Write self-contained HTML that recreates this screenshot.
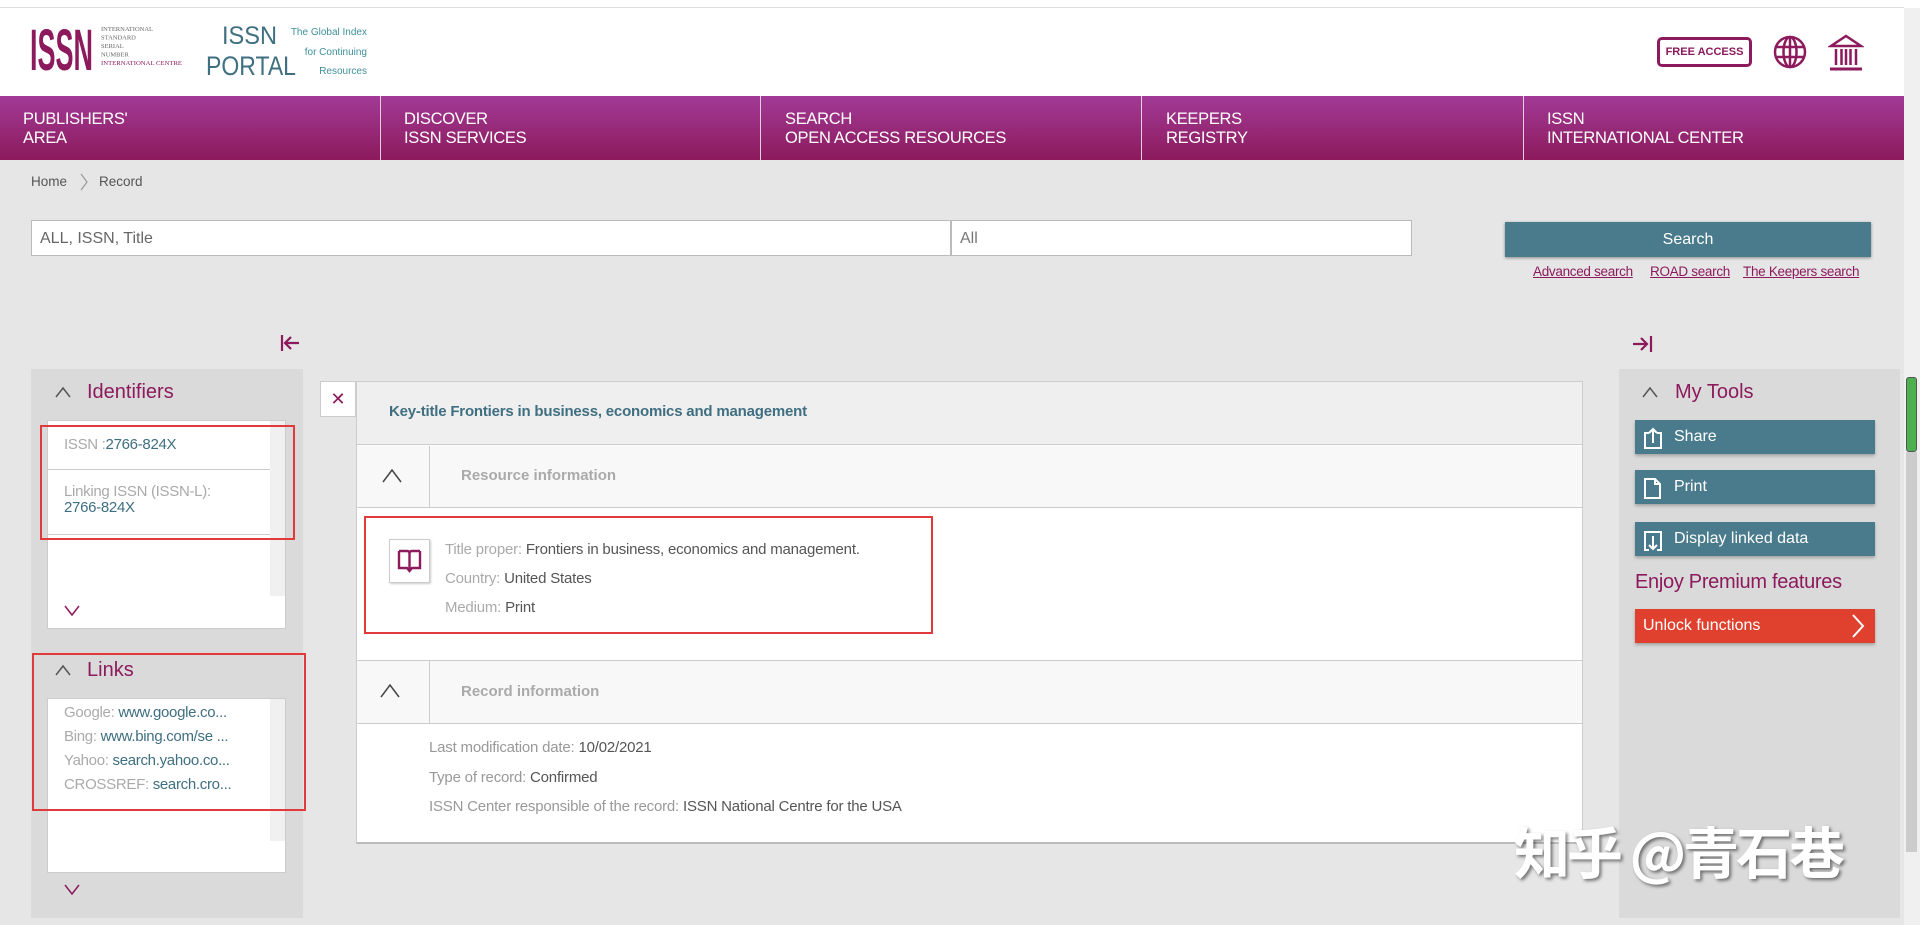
<!DOCTYPE html>
<html><head><meta charset="utf-8"><style>
*{margin:0;padding:0;box-sizing:border-box}
body{width:1920px;height:925px;overflow:hidden;background:#e6e6e6;font-family:"Liberation Sans",Arial,sans-serif;position:relative}
.a{position:absolute}
.nav{left:0;top:96px;width:1904px;height:64px;background:linear-gradient(#a23a96,#8c1a5c)}
.nav div{position:absolute;top:14px;color:#fff;font-size:16.5px;line-height:19px;letter-spacing:-.3px}
.sep{position:absolute;top:0;width:1px;height:64px;background:#e8d0e0}
.lbl{color:#aaa}
.val{color:#555}
.teal{color:#3f6f80}
.btn{position:absolute;left:1635px;width:240px;height:34px;background:#4a7b8c;color:#fff;font-size:16px;line-height:34px;padding-left:39px;box-shadow:0 2px 3px rgba(0,0,0,.25)}
.btn svg{position:absolute;left:8px;top:7px}
.chev{position:absolute}
</style></head><body>
<div class="a" style="left:0;top:0;width:1920px;height:96px;background:#fff"></div>
<div class="a" style="left:0;top:7px;width:1904px;height:1px;background:#ddd"></div>
<!-- logo -->
<svg class="a" style="left:0;top:0" width="380" height="96">
<text x="30" y="70" font-family="Liberation Sans" font-weight="bold" font-size="58" fill="#8c1a5c" textLength="63" lengthAdjust="spacingAndGlyphs">ISSN</text>
<g font-family="Liberation Serif" font-size="6.5" fill="#666">
<text x="101" y="31">INTERNATIONAL</text><text x="101" y="39.5">STANDARD</text><text x="101" y="48">SERIAL</text><text x="101" y="56.5">NUMBER</text><text x="101" y="65" fill="#8c1a5c" textLength="81" lengthAdjust="spacingAndGlyphs">INTERNATIONAL CENTRE</text></g>
<text x="222" y="44" font-family="Liberation Sans" font-size="25" fill="#3f6f80" textLength="55" lengthAdjust="spacingAndGlyphs">ISSN</text>
<text x="206" y="75" font-family="Liberation Sans" font-size="27" fill="#3f6f80" textLength="90" lengthAdjust="spacingAndGlyphs">PORTAL</text>
<g font-family="Liberation Sans" font-size="10" fill="#3f8f9a" text-anchor="end">
<text x="367" y="35">The Global Index</text><text x="367" y="55">for Continuing</text><text x="367" y="74">Resources</text></g>
</svg>
<!-- right icons -->
<div class="a" style="left:1657px;top:37px;width:95px;height:30px;border:3px solid #8c1a5c;border-radius:5px;color:#8c1a5c;font-size:11px;font-weight:bold;text-align:center;line-height:24px">FREE ACCESS</div>
<svg class="a" style="left:1773px;top:35px" width="34" height="34" viewBox="0 0 34 34" fill="none" stroke="#8c1a5c" stroke-width="2.5"><circle cx="17" cy="17" r="15"/><ellipse cx="17" cy="17" rx="6.5" ry="15"/><line x1="17" y1="2" x2="17" y2="32"/><line x1="2" y1="12" x2="32" y2="12"/><line x1="2" y1="22" x2="32" y2="22"/></svg>
<svg class="a" style="left:1828px;top:33px" width="36" height="38" viewBox="0 0 36 38" fill="none" stroke="#8c1a5c" stroke-width="2.5"><path d="M3 13 L18 3 L33 13 Z"/><path d="M8 16v16M13.5 16v16M18 16v16M22.5 16v16M28 16v16"/><line x1="2" y1="36" x2="34" y2="36" stroke-width="3"/></svg>
<!-- nav -->
<div class="a nav">
<div style="left:23px">PUBLISHERS'<br>AREA</div><span class="sep" style="left:380px"></span>
<div style="left:404px">DISCOVER<br>ISSN SERVICES</div><span class="sep" style="left:760px"></span>
<div style="left:785px">SEARCH<br>OPEN ACCESS RESOURCES</div><span class="sep" style="left:1141px"></span>
<div style="left:1166px">KEEPERS<br>REGISTRY</div><span class="sep" style="left:1523px"></span>
<div style="left:1547px">ISSN<br>INTERNATIONAL CENTER</div>
</div>
<!-- breadcrumb -->
<div class="a" style="left:31px;top:174px;font-size:13.5px;color:#555">Home</div>
<svg class="a" style="left:79px;top:172px" width="10" height="20" viewBox="0 0 10 20" fill="none" stroke="#999" stroke-width="1.2"><path d="M2 2l6 8-6 8"/></svg>
<div class="a" style="left:99px;top:174px;font-size:13.5px;color:#555">Record</div>
<!-- search -->
<div class="a" style="left:31px;top:220px;width:920px;height:36px;background:#fff;border:1px solid #bbb;font-size:16px;color:#666;padding:9px 8px">ALL, ISSN, Title</div>
<div class="a" style="left:951px;top:220px;width:461px;height:36px;background:#fff;border:1px solid #bbb;font-size:16px;color:#777;padding:9px 8px">All</div>
<div class="a" style="left:1505px;top:222px;width:366px;height:35px;background:#4a7b8c;color:#fff;font-size:16px;text-align:center;line-height:35px;box-shadow:0 1px 3px rgba(0,0,0,.4)">Search</div>
<div class="a" style="left:1533px;top:264px;font-size:13.5px;color:#8c1a5c;text-decoration:underline;letter-spacing:-.3px">Advanced search</div>
<div class="a" style="left:1650px;top:264px;font-size:13.5px;color:#8c1a5c;text-decoration:underline;letter-spacing:-.3px">ROAD search</div>
<div class="a" style="left:1743px;top:264px;font-size:13.5px;color:#8c1a5c;text-decoration:underline;letter-spacing:-.3px">The Keepers search</div>
<!-- collapse arrows -->
<svg class="a" style="left:280px;top:334px" width="22" height="18" viewBox="0 0 22 18" fill="none" stroke="#8c1a5c" stroke-width="2.2"><line x1="2" y1="1" x2="2" y2="17"/><path d="M19 9H6M11 3L5 9l6 6"/></svg>
<svg class="a" style="left:1631px;top:335px" width="22" height="18" viewBox="0 0 22 18" fill="none" stroke="#8c1a5c" stroke-width="2.2"><line x1="20" y1="1" x2="20" y2="17"/><path d="M2 9h13M10 3l6 6-6 6"/></svg>
<!-- left panel -->
<div class="a" style="left:31px;top:369px;width:272px;height:549px;background:#dadada"></div>
<svg class="chev" style="left:55px;top:386px" width="16" height="12" viewBox="0 0 16 12" fill="none" stroke="#555" stroke-width="1.5"><path d="M1 11L8 2l7 9"/></svg>
<div class="a" style="left:87px;top:381px;font-size:20px;color:#8c1a5c">Identifiers</div>
<div class="a" style="left:47px;top:420px;width:239px;height:209px;background:#fff;border:1px solid #ccc"></div>
<div class="a" style="left:270px;top:421px;width:15px;height:175px;background:#f0f0f0"></div>
<div class="a" style="left:47px;top:469px;width:223px;height:1px;background:#ccc"></div>
<div class="a" style="left:47px;top:534px;width:223px;height:1px;background:#ccc"></div>
<div class="a" style="left:64px;top:436px;font-size:15px;letter-spacing:-.3px"><span class="lbl">ISSN :</span><span class="teal">2766-824X</span></div>
<div class="a" style="left:64px;top:484px;font-size:15px;line-height:16px;letter-spacing:-.3px"><span class="lbl">Linking ISSN (ISSN-L):</span><br><span class="teal">2766-824X</span></div>
<svg class="chev" style="left:64px;top:605px" width="16" height="12" viewBox="0 0 16 12" fill="none" stroke="#8c1a5c" stroke-width="1.5"><path d="M1 1l7 9 7-9"/></svg>
<svg class="chev" style="left:55px;top:664px" width="16" height="12" viewBox="0 0 16 12" fill="none" stroke="#555" stroke-width="1.5"><path d="M1 11L8 2l7 9"/></svg>
<div class="a" style="left:87px;top:659px;font-size:20px;color:#8c1a5c">Links</div>
<div class="a" style="left:47px;top:698px;width:239px;height:175px;background:#fff;border:1px solid #ccc"></div>
<div class="a" style="left:270px;top:699px;width:15px;height:142px;background:#f0f0f0"></div>
<div class="a" style="left:64px;top:701px;font-size:15px;line-height:24px;white-space:nowrap;letter-spacing:-.3px"><span class="lbl">Google: </span><span class="teal">www.google.co...</span><br><span class="lbl">Bing: </span><span class="teal">www.bing.com/se ...</span><br><span class="lbl">Yahoo: </span><span class="teal">search.yahoo.co...</span><br><span class="lbl">CROSSREF: </span><span class="teal">search.cro...</span></div>
<svg class="chev" style="left:64px;top:884px" width="16" height="12" viewBox="0 0 16 12" fill="none" stroke="#8c1a5c" stroke-width="1.5"><path d="M1 1l7 9 7-9"/></svg>
<!-- red boxes -->
<div class="a" style="left:40px;top:425px;width:255px;height:115px;border:2px solid #e03a3a"></div>
<div class="a" style="left:32px;top:653px;width:274px;height:158px;border:2px solid #e03a3a"></div>
<!-- main -->
<div class="a" style="left:320px;top:381px;width:36px;height:36px;background:#fff;border:1px solid #ccc;color:#8c1a5c;font-size:18px;text-align:center;line-height:34px">&#x2715;</div>
<div class="a" style="left:356px;top:381px;width:1227px;height:463px;background:#fff;border:1px solid #ccc;border-bottom:2px solid #bbb"></div>
<div class="a" style="left:357px;top:382px;width:1225px;height:63px;background:#efefef;border-bottom:1px solid #ccc"></div>
<div class="a" style="left:389px;top:403px;font-size:15px;font-weight:bold;color:#3f6f80;letter-spacing:-.2px">Key-title Frontiers in business, economics and management</div>
<div class="a" style="left:357px;top:446px;width:1225px;height:62px;background:#f8f8f8;border-bottom:1px solid #ccc"></div>
<div class="a" style="left:429px;top:446px;width:1px;height:62px;background:#ccc"></div>
<svg class="chev" style="left:382px;top:469px" width="20" height="14" viewBox="0 0 20 14" fill="none" stroke="#444" stroke-width="1.5"><path d="M1 13L10 1l9 12"/></svg>
<div class="a" style="left:461px;top:467px;font-size:15px;font-weight:bold;color:#aaa">Resource information</div>
<div class="a" style="left:389px;top:539px;width:41px;height:44px;background:#fff;border:1px solid #ccc;box-shadow:1px 1px 2px rgba(0,0,0,.2)"></div>
<svg class="a" style="left:397px;top:548px" width="25" height="26" viewBox="0 0 25 26" fill="none" stroke="#8c1a5c" stroke-width="2.4"><path d="M2 3h8c2 0 2.5 1 2.5 3v17M23 3h-8c-2 0-2.5 1-2.5 3M2 3v17h8l2.5 3 2.5-3h8V3"/></svg>
<div class="a" style="left:445px;top:535px;font-size:15px;line-height:29px;letter-spacing:-.2px"><span class="lbl">Title proper: </span><span class="val">Frontiers in business, economics and management.</span><br><span class="lbl">Country: </span><span class="val">United States</span><br><span class="lbl">Medium: </span><span class="val">Print</span></div>
<div class="a" style="left:364px;top:516px;width:569px;height:118px;border:2px solid #e03a3a"></div>
<div class="a" style="left:357px;top:660px;width:1225px;height:64px;background:#f8f8f8;border-top:1px solid #ccc;border-bottom:1px solid #ccc"></div>
<div class="a" style="left:429px;top:661px;width:1px;height:63px;background:#ccc"></div>
<svg class="chev" style="left:380px;top:684px" width="20" height="14" viewBox="0 0 20 14" fill="none" stroke="#444" stroke-width="1.5"><path d="M1 13L10 1l9 12"/></svg>
<div class="a" style="left:461px;top:683px;font-size:15px;font-weight:bold;color:#aaa">Record information</div>
<div class="a" style="left:429px;top:733px;font-size:15px;line-height:29.5px;letter-spacing:-.2px"><span style="color:#999">Last modification date: </span><span class="val">10/02/2021</span><br><span style="color:#999">Type of record: </span><span class="val">Confirmed</span><br><span style="color:#999">ISSN Center responsible of the record: </span><span class="val">ISSN National Centre for the USA</span></div>
<!-- right panel -->
<div class="a" style="left:1619px;top:369px;width:281px;height:549px;background:#dadada"></div>
<svg class="chev" style="left:1642px;top:386px" width="16" height="12" viewBox="0 0 16 12" fill="none" stroke="#555" stroke-width="1.5"><path d="M1 11L8 2l7 9"/></svg>
<div class="a" style="left:1675px;top:381px;font-size:20px;color:#8c1a5c">My Tools</div>
<div class="btn" style="top:420px"><svg width="20" height="22" viewBox="0 0 20 22" fill="none" stroke="#fff" stroke-width="2"><path d="M6 6H2v15h16V6h-4M10 16V2M6 6l4-4 4 4"/></svg>Share</div>
<div class="btn" style="top:470px"><svg width="20" height="22" viewBox="0 0 20 22" fill="none" stroke="#fff" stroke-width="2"><path d="M2 2h10l5 5v14H2zM12 2v5h5"/></svg>Print</div>
<div class="btn" style="top:522px"><svg width="20" height="22" viewBox="0 0 20 22" fill="none" stroke="#fff" stroke-width="2"><path d="M6 21H2V3h16v18h-4M10 7v13M6 16l4 4 4-4"/></svg>Display linked data</div>
<div class="a" style="left:1635px;top:571px;font-size:20px;color:#8c1a5c;letter-spacing:-.3px">Enjoy Premium features</div>
<div class="a" style="left:1635px;top:609px;width:240px;height:34px;background:#e0402e;color:#fff;font-size:16px;line-height:34px;padding-left:8px;box-shadow:0 2px 3px rgba(0,0,0,.25)">Unlock functions<svg style="position:absolute;right:10px;top:5px" width="14" height="24" viewBox="0 0 14 24" fill="none" stroke="#fff" stroke-width="2"><path d="M2 1l10 11L2 23"/></svg></div>
<!-- watermark -->
<div class="a" style="left:1514px;top:810px;font-family:'Noto Sans CJK SC',sans-serif;font-size:56px;font-weight:bold;color:#fff;text-shadow:2px 2px 3px rgba(0,0,0,.5);white-space:nowrap;letter-spacing:-3px">知乎 @青石巷</div>
<!-- scrollbar -->
<div class="a" style="left:1904px;top:8px;width:16px;height:917px;background:#f0f0f0"></div>
<div class="a" style="left:1906px;top:377px;width:11px;height:75px;background:#4caf50;border:1px solid #555;border-radius:3px"></div>
<div class="a" style="left:1906px;top:452px;width:11px;height:400px;background:#ccc"></div>
</body></html>
